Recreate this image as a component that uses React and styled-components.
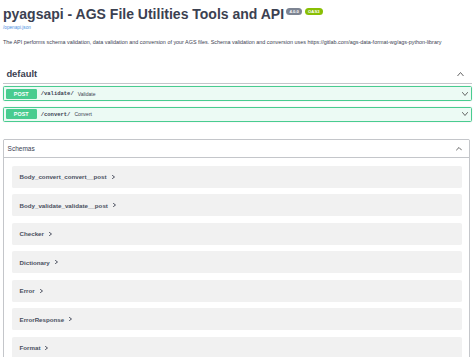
import React from "react";
import styled, { createGlobalStyle } from "styled-components";

const Global = createGlobalStyle`
  html, body { margin: 0; padding: 0; background: #fff; }
  body { font-family: "Liberation Sans", Arial, sans-serif; color: #3b4151; overflow: hidden; }
  * { box-sizing: border-box; }
`;

const Page = styled.div`
  width: 474px;
  height: 357px;
  overflow: hidden;
  padding: 0 2px 0 3px;
`;

const Info = styled.div`
  padding-top: 6px;
`;

const Title = styled.h2`
  margin: 0;
  display: flex;
  align-items: flex-start;
  font-size: 14px;
  line-height: 17px;
  font-weight: 700;
  color: #3b4151;
  white-space: nowrap;
`;

const Badge = styled.span`
  margin-top: 2px;
  margin-left: ${(p) => p.$ml}px;
  display: inline-block;
  background: ${(p) => p.$bg};
  color: #fff;
  font-size: 4.2px;
  line-height: 5px;
  font-weight: 700;
  padding: 1px 3.4px;
  border-radius: 20px;
`;

const SpecLink = styled.a`
  display: block;
  margin-top: 1.5px;
  font-size: 4.7px;
  line-height: 6px;
  color: #4990e2;
  text-decoration: none;
`;

const Desc = styled.p`
  margin: 8px 0 0;
  font-size: 5.42px;
  line-height: 7px;
  color: #3b4151;
  white-space: nowrap;
`;

const Tag = styled.div`
  margin-top: 19px;
`;

const TagHeader = styled.h3`
  margin: 0 0 2.4px;
  display: flex;
  align-items: center;
  justify-content: space-between;
  padding: 3.8px 8px 3.8px 3.4px;
  font-size: 9.4px;
  line-height: 11px;
  font-weight: 700;
  color: #3b4151;
  border-bottom: 1px solid rgba(59, 65, 81, 0.3);
`;

const Ops = styled.div`
  display: flex;
  flex-direction: column;
  gap: 5.5px;
  margin-left: -0.3px;
`;

const Op = styled.div`
  height: 15px;
  display: flex;
  align-items: center;
  padding: 0 3.5px 0 2px;
  background: rgba(73, 204, 144, 0.1);
  border: 1px solid #49cc90;
  border-radius: 1.6px;
  box-shadow: 0 0 1.2px rgba(0, 0, 0, 0.19);
`;

const Method = styled.span`
  width: 31px;
  height: 10px;
  flex: none;
  display: flex;
  align-items: center;
  justify-content: center;
  background: #49cc90;
  color: #fff;
  border-radius: 1.2px;
  font-size: 5.4px;
  font-weight: 700;
`;

const Path = styled.span`
  margin-left: 4px;
  font-family: "Liberation Mono", "Courier New", monospace;
  font-weight: 700;
  font-size: 5.5px;
  color: #3b4151;
`;

const Summary = styled.span`
  margin-left: 4px;
  font-size: 5px;
  color: #3b4151;
  flex: 1;
`;

const Models = styled.section`
  margin-top: 17.5px;
  margin-right: 2px;
  border: 1px solid rgba(59, 65, 81, 0.3);
  border-radius: 1.6px;
`;

const ModelsHeader = styled.h4`
  margin: 0;
  height: 18px;
  display: flex;
  align-items: center;
  justify-content: space-between;
  padding: 0 7px 0 3.6px;
  font-size: 6.5px;
  font-weight: 400;
  color: #3b4151;
  border-bottom: 1px solid rgba(59, 65, 81, 0.3);
`;

const ModelList = styled.div`
  display: flex;
  flex-direction: column;
  gap: 6.5px;
  padding: 7.5px 7px 10px 8px;
`;

const Model = styled.div`
  height: 22px;
  display: flex;
  align-items: center;
  padding-left: 7.5px;
  background: rgba(0, 0, 0, 0.055);
  border-radius: 1.6px;
  font-size: 6.2px;
  font-weight: 700;
  color: #4a505e;
`;

const ArrowWrap = styled.span`
  display: inline-flex;
  margin-left: ${(p) => p.$ml || 0}px;
`;

const Chevron = ({ dir = "down", w = 6, h = 4, color = "#3b4151", ml, sw = 0.9 }) => {
  const pts =
    dir === "up"
      ? `0.5,${h - 0.5} ${w / 2},0.5 ${w - 0.5},${h - 0.5}`
      : dir === "down"
      ? `0.5,0.5 ${w / 2},${h - 0.5} ${w - 0.5},0.5`
      : `0.5,0.5 ${w - 0.5},${h / 2} 0.5,${h - 0.5}`;
  return (
    <ArrowWrap $ml={ml}>
      <svg width={w} height={h} viewBox={`0 0 ${w} ${h}`}>
        <polyline points={pts} fill="none" stroke={color} strokeWidth={sw} strokeLinecap="round" strokeLinejoin="round" />
      </svg>
    </ArrowWrap>
  );
};

const ops = [
  { path: "/validate/", summary: "Validate" },
  { path: "/convert/", summary: "Convert" },
];

const models = [
  "Body_convert_convert__post",
  "Body_validate_validate__post",
  "Checker",
  "Dictionary",
  "Error",
  "ErrorResponse",
  "Format",
];

export default function App() {
  return (
    <Page>
      <Global />
      <Info>
        <Title>
          pyagsapi - AGS File Utilities Tools and API
          <Badge $bg="#7d8492" $ml={2}>4.0.0</Badge>
          <Badge $bg="#89bf04" $ml={2.5}>OAS3</Badge>
        </Title>
        <SpecLink href="#">/openapi.json</SpecLink>
        <Desc>
          The API performs schema validation, data validation and conversion of your AGS files. Schema validation and conversion uses https://gitlab.com/ags-data-format-wg/ags-python-library
        </Desc>
      </Info>
      <Tag>
        <TagHeader>
          default
          <Chevron dir="up" w={7} h={4.5} color="#555" />
        </TagHeader>
        <Ops>
          {ops.map((o) => (
            <Op key={o.path}>
              <Method>POST</Method>
              <Path>{o.path}</Path>
              <Summary>{o.summary}</Summary>
              <Chevron dir="down" w={6} h={4} color="#555" />
            </Op>
          ))}
        </Ops>
      </Tag>
      <Models>
        <ModelsHeader>
          Schemas
          <Chevron dir="up" w={6} h={3.5} color="#555" />
        </ModelsHeader>
        <ModelList>
          {models.map((m) => (
            <Model key={m}>
              {m}
              <Chevron dir="right" w={3} h={4} ml={5} sw={0.9} />
            </Model>
          ))}
        </ModelList>
      </Models>
    </Page>
  );
}
